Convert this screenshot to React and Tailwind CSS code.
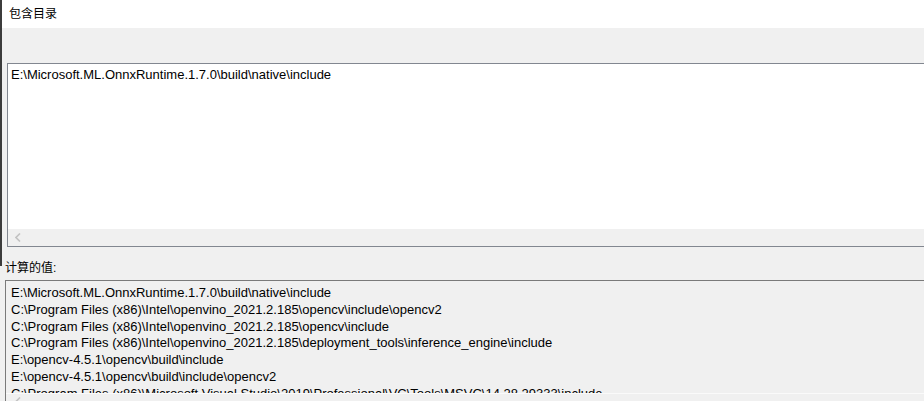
import React from "react";

const lines = [
  "E:\\Microsoft.ML.OnnxRuntime.1.7.0\\build\\native\\include",
  "C:\\Program Files (x86)\\Intel\\openvino_2021.2.185\\opencv\\include\\opencv2",
  "C:\\Program Files (x86)\\Intel\\openvino_2021.2.185\\opencv\\include",
  "C:\\Program Files (x86)\\Intel\\openvino_2021.2.185\\deployment_tools\\inference_engine\\include",
  "E:\\opencv-4.5.1\\opencv\\build\\include",
  "E:\\opencv-4.5.1\\opencv\\build\\include\\opencv2",
  "C:\\Program Files (x86)\\Microsoft Visual Studio\\2019\\Professional\\VC\\Tools\\MSVC\\14.28.29333\\include",
];

function LeftArrow() {
  return (
    <svg width="6" height="9" viewBox="0 0 6 9" className="block">
      <path d="M5 0.5 L1 4.5 L5 8.5" fill="none" stroke="#c2c2c2" strokeWidth="1.6" />
    </svg>
  );
}

export default function App() {
  return (
    <div
      className="w-[924px] h-[401px] overflow-hidden bg-[#f0f0f0] flex text-[13px] text-black"
      style={{ fontFamily: '"Liberation Sans", "Noto Sans CJK SC", sans-serif' }}
    >
      <div className="w-[2px] h-[266px] shrink-0 bg-[#3c3c3c]" />
      <div className="flex-1 flex flex-col min-w-0">
        <div className="h-[28px] bg-white pl-[7px] flex items-center shrink-0">
          <span className="leading-[16px] text-[12px]">包含目录</span>
        </div>
        <div className="h-[35px] shrink-0" />
        <div className="ml-[5px] h-[184px] shrink-0 border border-r-0 border-[#828790] bg-white flex flex-col">
          <div className="flex-1 pl-[3px] pt-[2px] leading-[17px] whitespace-nowrap">{lines[0]}</div>
          <div className="h-[17px] bg-[#f0f0f0] flex items-center pl-[7px]">
            <LeftArrow />
          </div>
        </div>
        <div className="h-[33px] shrink-0 pl-[3px] flex items-end pb-[4px]">
          <span className="leading-[16px] text-[12px]">计算的值:</span>
        </div>
        <div className="ml-[3px] flex-1 border-t border-l border-[#7a7a7a] bg-[#f0f0f0] flex flex-col overflow-hidden">
          <div className="h-[112px] shrink-0 overflow-hidden pl-[5px] pt-[4px] whitespace-nowrap">
            {lines.map((l, i) => (
              <div key={i} className="leading-[16.8px]">{l}</div>
            ))}
          </div>
          <div className="flex-1 border-t border-[#fafafa] bg-[#f0f0f0] flex items-start pt-[3px] pl-[9px]">
            <LeftArrow />
          </div>
        </div>
      </div>
    </div>
  );
}
